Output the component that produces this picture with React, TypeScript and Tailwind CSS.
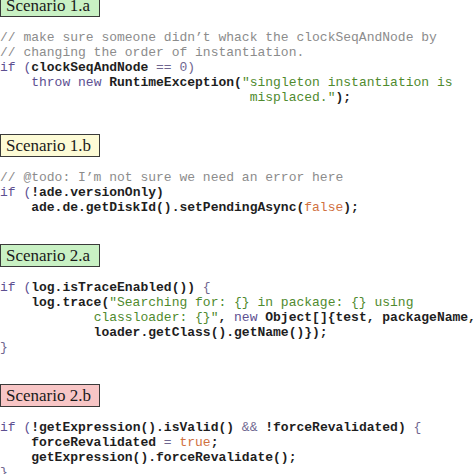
type Seg = [string, string?];

const KW = "text-[#5d4f91] font-normal";
const CM = "text-[#8c8c8c] font-normal";
const ST = "text-[#4f8a2e] font-normal";
const LT = "text-[#d0713f] font-normal";
const OP = "text-[#6f6690] font-normal";

type Block = {
    title: string;
    bg: string;
    lines: Seg[][];
};

const blocks: Block[] = [
    {
        title: "Scenario 1.a",
        bg: "bg-[#c9f1c4]",
        lines: [
            [["// make sure someone didn’t whack the clockSeqAndNode by", CM]],
            [["// changing the order of instantiation.", CM]],
            [["if (", KW], ["clockSeqAndNode"], [" == 0)", OP]],
            [["    "], ["throw new", KW], [" RuntimeException("], ["\"singleton instantiation is", ST]],
            [["                                "], ["misplaced.\"", ST], [");"]],
        ],
    },
    {
        title: "Scenario 1.b",
        bg: "bg-[#fdfbd6]",
        lines: [
            [["// @todo: I’m not sure we need an error here", CM]],
            [["if (", KW], ["!ade.versionOnly)"]],
            [["    ade.de.getDiskId().setPendingAsync("], ["false", LT], [");"]],
        ],
    },
    {
        title: "Scenario 2.a",
        bg: "bg-[#c9f1c4]",
        lines: [
            [["if (", KW], ["log.isTraceEnabled()) "], ["{", OP]],
            [["    log.trace("], ["\"Searching for: {} in package: {} using", ST]],
            [["            "], ["classloader: {}\"", ST], [", "], ["new", KW], [" Object[]{test, packageName,"]],
            [["            loader.getClass().getName()});"]],
            [["}", OP]],
        ],
    },
    {
        title: "Scenario 2.b",
        bg: "bg-[#f8c6c6]",
        lines: [
            [["if (", KW], ["!getExpression().isValid() "], ["&&", OP], [" !forceRevalidated) "], ["{", OP]],
            [["    forceRevalidated "], ["=", OP], [" "], ["true", LT], [";"]],
            [["    getExpression().forceRevalidate();"]],
            [["}", OP]],
        ],
    },
];

export default function App() {
    return (
        <div className="w-[474px] h-[474px] overflow-hidden bg-white flex flex-col">
            {blocks.map((b, i) => (
                <section key={b.title} className={i === 0 ? "-mt-[6px]" : "mt-[29px]"}>
                    <div
                        className={`w-[100px] h-[23px] flex items-center pl-[5px] border border-[#3a3a3a] ${b.bg} text-[17px] text-[#1a1a1a] font-['Liberation_Serif',serif]`}
                    >
                        {b.title}
                    </div>
                    <pre className="mt-[13px] font-['Liberation_Mono',monospace] text-[13px] leading-[15px] font-bold text-[#1e1e1e]">
                        {b.lines.map((line, j) => (
                            <div key={j} className="h-[15px] whitespace-pre">
                                {line.map(([text, cls], k) => (
                                    <span key={k} className={cls}>
                                        {text}
                                    </span>
                                ))}
                            </div>
                        ))}
                    </pre>
                </section>
            ))}
        </div>
    );
}
